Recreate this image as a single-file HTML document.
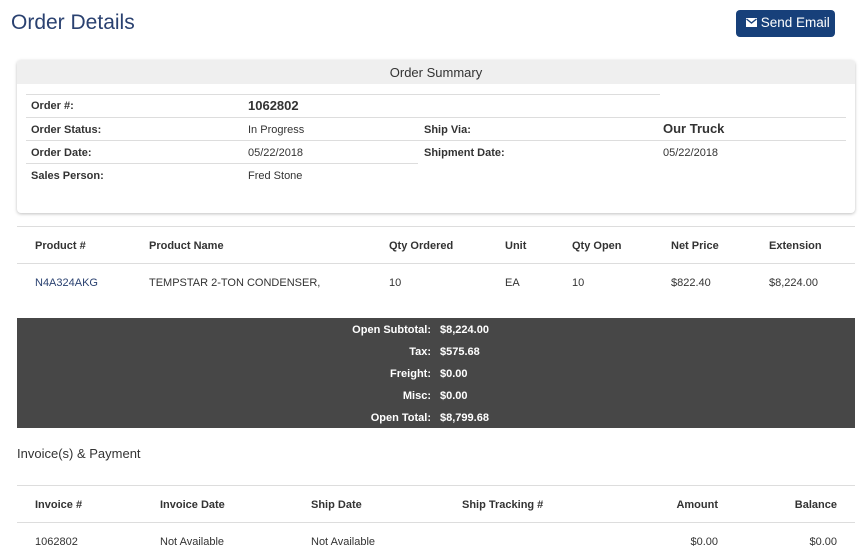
<!DOCTYPE html>
<html><head><meta charset="utf-8"><style>
*{margin:0;padding:0;box-sizing:border-box}
body{width:863px;height:559px;background:#fff;font-family:"Liberation Sans",Arial,sans-serif;color:#333;position:relative;overflow:hidden}
.a{position:absolute;white-space:nowrap;line-height:1}
.b{font-weight:bold}
.s{font-size:11px}
.l{position:absolute;height:1px;background:#ddd}
.w{color:#fff;font-weight:bold;font-size:11px}
</style></head><body>
<div class="a" style="left:11px;top:12px;font-size:21px;color:#2a4170">Order Details</div>
<div class="a" style="left:736px;top:10px;width:99px;height:27px;background:#17407a;border-radius:4px;color:#fff;font-size:13.5px;padding:6px 0 0 10px">
<svg width="11" height="9" viewBox="0 0 11 9" style="vertical-align:0"><rect width="11" height="9" fill="#fff"/><path d="M0.5 1 L5.5 5 L10.5 1" stroke="#17407a" stroke-width="1.4" fill="none"/></svg> Send Email</div>

<div style="position:absolute;left:17px;top:60px;width:838px;height:153px;background:#fff;border-radius:4px;box-shadow:0 1px 3px rgba(0,0,0,.25)"></div>
<div style="position:absolute;left:17px;top:60px;width:838px;height:24px;background:#efefef;border-radius:4px 4px 0 0"></div>
<div class="a" style="left:17px;width:838px;text-align:center;top:66px;font-size:13px;color:#333">Order Summary</div>
<div class="l" style="left:26px;top:94px;width:634px"></div>
<div class="l" style="left:26px;top:117px;width:820px"></div>
<div class="l" style="left:26px;top:140px;width:820px"></div>
<div class="l" style="left:26px;top:163px;width:392px"></div>
<div class="a s b" style="left:31px;top:101px">Order #:</div>
<div class="a b" style="left:248px;top:99px;font-size:13px">1062802</div>
<div class="a s b" style="left:31px;top:125px">Order Status:</div>
<div class="a s" style="left:248px;top:125px">In Progress</div>
<div class="a s b" style="left:424px;top:125px">Ship Via:</div>
<div class="a b" style="left:663px;top:122px;font-size:13px">Our Truck</div>
<div class="a s b" style="left:31px;top:148px">Order Date:</div>
<div class="a s" style="left:248px;top:148px">05/22/2018</div>
<div class="a s b" style="left:424px;top:148px">Shipment Date:</div>
<div class="a s" style="left:663px;top:148px">05/22/2018</div>
<div class="a s b" style="left:31px;top:171px">Sales Person:</div>
<div class="a s" style="left:248px;top:171px">Fred Stone</div>

<div class="l" style="left:17px;top:226px;width:838px"></div>
<div class="l" style="left:17px;top:263px;width:838px"></div>
<div class="a s b" style="left:35px;top:241px">Product #</div>
<div class="a s b" style="left:149px;top:241px">Product Name</div>
<div class="a s b" style="left:389px;top:241px">Qty Ordered</div>
<div class="a s b" style="left:505px;top:241px">Unit</div>
<div class="a s b" style="left:572px;top:241px">Qty Open</div>
<div class="a s b" style="left:671px;top:241px">Net Price</div>
<div class="a s b" style="left:769px;top:241px">Extension</div>
<div class="a s" style="left:35px;top:278px;color:#2a4170">N4A324AKG</div>
<div class="a s" style="left:149px;top:278px">TEMPSTAR 2-TON CONDENSER,</div>
<div class="a s" style="left:389px;top:278px">10</div>
<div class="a s" style="left:505px;top:278px">EA</div>
<div class="a s" style="left:572px;top:278px">10</div>
<div class="a s" style="left:671px;top:278px">$822.40</div>
<div class="a s" style="left:769px;top:278px">$8,224.00</div>

<div style="position:absolute;left:17px;top:318px;width:838px;height:110px;background:#474747"></div>
<div class="a w" style="right:432px;top:325px">Open Subtotal:</div><div class="a w" style="left:440px;top:325px">$8,224.00</div>
<div class="a w" style="right:432px;top:347px">Tax:</div><div class="a w" style="left:440px;top:347px">$575.68</div>
<div class="a w" style="right:432px;top:369px">Freight:</div><div class="a w" style="left:440px;top:369px">$0.00</div>
<div class="a w" style="right:432px;top:391px">Misc:</div><div class="a w" style="left:440px;top:391px">$0.00</div>
<div class="a w" style="right:432px;top:413px">Open Total:</div><div class="a w" style="left:440px;top:413px">$8,799.68</div>

<div class="a" style="left:17px;top:447px;font-size:13px">Invoice(s) &amp; Payment</div>
<div class="l" style="left:17px;top:485px;width:838px"></div>
<div class="l" style="left:17px;top:522px;width:838px"></div>
<div class="a s b" style="left:35px;top:500px">Invoice #</div>
<div class="a s b" style="left:160px;top:500px">Invoice Date</div>
<div class="a s b" style="left:311px;top:500px">Ship Date</div>
<div class="a s b" style="left:462px;top:500px">Ship Tracking #</div>
<div class="a s b" style="right:145px;top:500px">Amount</div>
<div class="a s b" style="right:26px;top:500px">Balance</div>
<div class="a s" style="left:35px;top:537px">1062802</div>
<div class="a s" style="left:160px;top:537px">Not Available</div>
<div class="a s" style="left:311px;top:537px">Not Available</div>
<div class="a s" style="right:145px;top:537px">$0.00</div>
<div class="a s" style="right:26px;top:537px">$0.00</div>
</body></html>
